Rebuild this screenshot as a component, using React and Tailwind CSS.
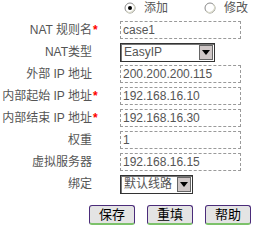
import React from 'react';

const font = { fontFamily: '"Liberation Sans", "Noto Sans CJK SC", sans-serif' };

function Radio({ checked }) {
    return (
        <svg width="12" height="12" viewBox="0 0 12 12" className="shrink-0">
            <circle cx="6" cy="6" r="5" fill="#fff" stroke="#8a8a8a" strokeWidth="1" />
            <path d="M2.5 9.5 A5 5 0 0 0 9.5 2.5" fill="none" stroke="#d8d8c8" strokeWidth="1.2" />
            {checked && <circle cx="6" cy="6" r="2" fill="#000" />}
        </svg>
    );
}

function Label({ text, req }) {
    return (
        <div className="w-[100px] shrink-0 flex justify-end items-center text-[12px] text-[#555] whitespace-nowrap">
            <span>{text}</span>
            <span className="w-[8px] text-[#ff0000] font-bold leading-none pl-[1px]">{req ? '*' : ''}</span>
        </div>
    );
}

function Field({ value }) {
    return (
        <div className="w-[121px] h-[18px] border border-dashed border-[#9a9a9a] flex items-center pl-[2px] text-[12px] text-[#555] bg-white">
            {value}
        </div>
    );
}

function Select({ value, width }) {
    return (
        <div className={`${width} h-[19px] border border-[#333] shadow-[inset_1px_1px_0_#777] flex items-center justify-between pl-[3px] pr-[1px] text-[12px] text-[#555] bg-white`}>
            <span>{value}</span>
            <span className="w-[14px] h-[15px] border border-[#666] bg-[#cfc7c7] flex items-center justify-center">
                <svg width="8" height="5" viewBox="0 0 8 5"><path d="M0 0 H8 L4 5 Z" fill="#000" /></svg>
            </span>
        </div>
    );
}

function Btn({ text }) {
    return (
        <button className="w-[46px] h-[20px] rounded-[3px] border border-[#4b2c7a] bg-[#e4e4e4] border-b-[2px] border-b-[#7cc26a] text-[13px] text-black leading-none">
            {text}
        </button>
    );
}

export default function App() {
    const rows = [
        { label: 'NAT 规则名', req: true, el: <Field value="case1" /> },
        { label: 'NAT类型', el: <Select value="EasyIP" width="w-[95px]" /> },
        { label: '外部 IP 地址', el: <Field value="200.200.200.115" /> },
        { label: '内部起始 IP 地址', req: true, el: <Field value="192.168.16.10" /> },
        { label: '内部结束 IP 地址', req: true, el: <Field value="192.168.16.30" /> },
        { label: '权重', el: <Field value="1" /> },
        { label: '虚拟服务器', el: <Field value="192.168.16.15" /> },
        { label: '绑定', el: <Select value="默认线路" width="w-[73px]" /> },
    ];

    return (
        <div className="w-[254px] h-[229px] bg-white" style={font}>
            <div className="flex items-center h-[16px] pl-[124px] text-[12px] text-[#555]">
                <Radio checked />
                <span className="ml-[8px]">添加</span>
                <span className="ml-[36px]"><Radio /></span>
                <span className="ml-[8px]">修改</span>
            </div>
            <div className="flex flex-col gap-[4px] mt-[5px]">
                {rows.map((r, i) => (
                    <div key={i} className="flex items-center gap-[20px] h-[18px]">
                        <Label text={r.label} req={r.req} />
                        {r.el}
                    </div>
                ))}
            </div>
            <div className="flex gap-[12px] pl-[89px] mt-[12px]">
                <Btn text="保存" />
                <Btn text="重填" />
                <Btn text="帮助" />
            </div>
        </div>
    );
}
